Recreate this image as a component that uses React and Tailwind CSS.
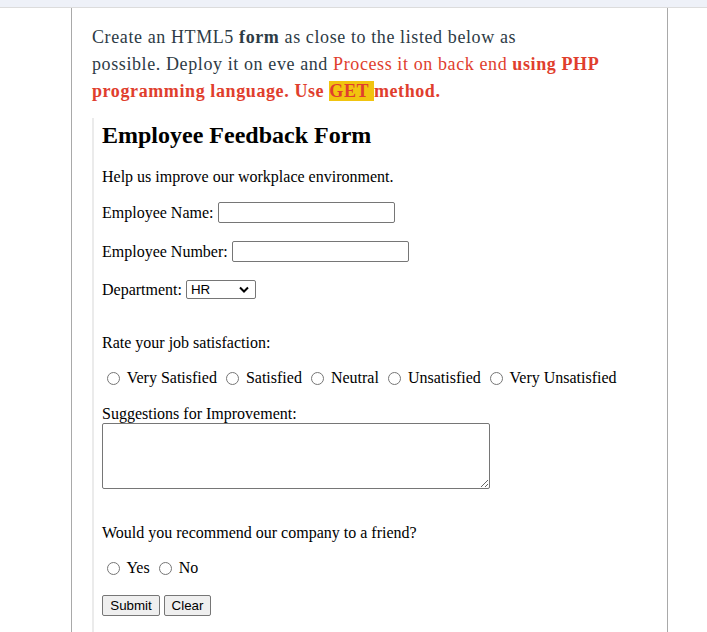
import React from "react";

function Radio({ name }) {
  return (
    <input
      type="radio"
      name={name}
      className="ml-[5px] mr-[3px] w-[13px] h-[13px] align-[-2px]"
    />
  );
}

export default function App() {
  return (
    <div className="w-[707px] h-[632px] bg-white overflow-hidden">
      <div className="h-[8px] bg-[#eef1f8] border-b border-[#dcdcdc]" />
      <div className="flex">
        <div className="ml-[71px] w-[597px] h-[624px] border-x border-[#a9a9a9] pl-[20px]">
          <p className="mt-[16px] text-[18px] leading-[27px] text-[#2d3b45] tracking-[0.6px] font-['Liberation_Serif',serif]">
            <span className="block">
              Create an HTML5 <strong>form</strong> as close to the listed below as
            </span>
            <span className="block">
              possible. Deploy it on eve and{" "}
              <span className="text-[#e03e2d]">Process it on back end </span>
              <strong className="text-[#e03e2d]">using PHP</strong>
            </span>
            <span className="block">
              <strong className="text-[#e03e2d]">
                programming language. Use{" "}
                <span className="bg-[#f1c40f]">GET </span>method.
              </strong>
            </span>
          </p>
          <div className="mt-[13px] border-l-2 border-[#ebebeb] pl-[8px] h-[520px] text-black text-[16px] font-['Liberation_Serif',serif]">
            <h2 className="pt-[3px] text-[24px] leading-[28px] font-bold">
              Employee Feedback Form
            </h2>
            <p className="mt-[18px] leading-[20px]">
              Help us improve our workplace environment.
            </p>
            <div className="mt-[15px] flex items-center h-[21px] gap-[4px]">
              <span>Employee Name:</span>
              <input
                type="text"
                className="w-[177px] h-[21px] border border-[#767676] rounded-[2px] bg-white"
              />
            </div>
            <div className="mt-[18px] flex items-center h-[21px] gap-[4px]">
              <span>Employee Number:</span>
              <input
                type="text"
                className="w-[177px] h-[21px] border border-[#767676] rounded-[2px] bg-white"
              />
            </div>
            <div className="mt-[18px] flex items-center h-[19px] gap-[4px]">
              <span>Department:</span>
              <div className="w-[70px] h-[19px] border border-[#767676] rounded-[2px] flex items-center justify-between pl-[4px] pr-[6px] text-[13.33px] font-['Liberation_Sans',sans-serif]">
                <span>HR</span>
                <svg width="10" height="7" viewBox="0 0 10 7">
                  <path d="M1 1.5 L5 5.5 L9 1.5" fill="none" stroke="#000" strokeWidth="2" />
                </svg>
              </div>
            </div>
            <p className="mt-[34px] leading-[20px]">Rate your job satisfaction:</p>
            <div className="mt-[15px] leading-[20px] h-[20px]">
              <label><Radio name="s" /> Very Satisfied </label>
              <label><Radio name="s" /> Satisfied </label>
              <label><Radio name="s" /> Neutral </label>
              <label><Radio name="s" /> Unsatisfied </label>
              <label><Radio name="s" /> Very Unsatisfied</label>
            </div>
            <p className="mt-[16px] leading-[19px]">Suggestions for Improvement:</p>
            <textarea className="block w-[388px] h-[66px] border border-[#767676] rounded-[2px] resize" />
            <p className="mt-[34px] leading-[20px]">
              Would you recommend our company to a friend?
            </p>
            <div className="mt-[15px] leading-[20px] h-[20px]">
              <label><Radio name="r" /> Yes </label>
              <label><Radio name="r" /> No</label>
            </div>
            <div className="mt-[17px] flex gap-[4px] text-[13.33px] font-['Liberation_Sans',sans-serif]">
              <button className="w-[58px] h-[21px] border border-[#767676] rounded-[2px] bg-[#efefef]">
                Submit
              </button>
              <button className="w-[47px] h-[21px] border border-[#767676] rounded-[2px] bg-[#efefef]">
                Clear
              </button>
            </div>
          </div>
        </div>
      </div>
    </div>
  );
}
